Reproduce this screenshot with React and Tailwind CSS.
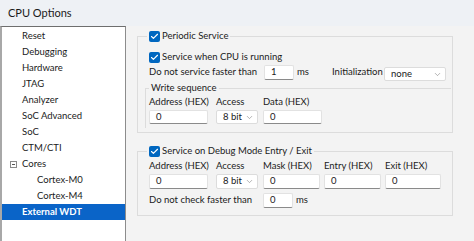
import { Check, ChevronDown } from "lucide-react";

const treeItems = [
  { label: "Reset", indent: 0 },
  { label: "Debugging", indent: 0 },
  { label: "Hardware", indent: 0 },
  { label: "JTAG", indent: 0 },
  { label: "Analyzer", indent: 0 },
  { label: "SoC Advanced", indent: 0 },
  { label: "SoC", indent: 0 },
  { label: "CTM/CTI", indent: 0 },
  { label: "Cores", indent: 0, toggle: true },
  { label: "Cortex-M0", indent: 1 },
  { label: "Cortex-M4", indent: 1 },
  { label: "External WDT", indent: 0, selected: true },
];

const CheckBox = () => (
  <span className="w-[11px] h-[11px] rounded-[2px] bg-[#0067c0] flex items-center justify-center shrink-0">
    <Check size={9} strokeWidth={3} className="text-white" />
  </span>
);

const Input = ({ value, w }) => (
  <div
    className={`${w} h-full bg-white border border-[#e2e2e2] border-b-[#8a8a8a] rounded-[2px] flex items-center pl-[6px] text-[#1a1a1a]`}
  >
    {value}
  </div>
);

const Select = ({ value, w }) => (
  <div
    className={`${w} h-full bg-white border border-[#dcdcdc] rounded-[2px] flex items-center justify-between pl-[6px] pr-[3px] text-[#1a1a1a] whitespace-nowrap`}
  >
    <span>{value}</span>
    <ChevronDown size={9} strokeWidth={1.25} className="text-[#606060]" />
  </div>
);

export default function App() {
  return (
    <div
      className="w-[474px] h-[241px] bg-[#f3f3f3] text-[9.5px] text-[#1b1b1b] overflow-hidden flex flex-col whitespace-nowrap"
      style={{ fontFamily: 'Lato, "Liberation Sans", sans-serif' }}
    >
      {/* Header */}
      <div className="h-[26px] shrink-0 bg-[#eef1f5] flex items-center pl-[8px] text-[11px] text-[#1a1a1a]">
        CPU Options
      </div>

      <div className="flex flex-1 min-h-0">
        {/* Tree */}
        <div className="w-[126px] shrink-0 bg-white border-l-2 border-t border-r border-l-[#a8a8a8] border-t-[#6e6e6e] border-r-[#8c8c8c] pt-[1px]">
          {treeItems.map((it) => (
            <div
              key={it.label}
              className={`h-[16px] flex items-center ${
                it.selected ? "bg-[#0a64c8] text-white font-bold" : ""
              }`}
            >
              {it.toggle ? (
                <span className="w-[20px] pl-[8px] flex items-center">
                  <span className="w-[7px] h-[7px] border border-[#8a8a8a] flex items-center justify-center">
                    <span className="w-[3px] h-[1px] bg-[#555]" />
                  </span>
                </span>
              ) : (
                <span className={it.indent ? "w-[35px]" : "w-[20px]"} />
              )}
              <span>{it.label}</span>
            </div>
          ))}
        </div>

        {/* Content */}
        <div className="flex-1 pl-[11px] pt-[4px]">
          {/* Periodic Service */}
          <fieldset className="w-[316px] border border-[#dcdcdc] pl-[11px] pb-[4px]">
            <legend className="-ml-[2px] px-[2px] h-[12px]">
              <span className="flex items-center gap-[2px] h-[12px]">
                <CheckBox />
                <span>Periodic Service</span>
              </span>
            </legend>
            <div className="mt-[8px] h-[14px] flex items-center gap-[2px]">
              <CheckBox />
              <span>Service when CPU is running</span>
            </div>
            <div className="mt-[1px] h-[15px] flex items-center">
              <span className="w-[115px]">Do not service faster than</span>
              <Input value="1" w="w-[30px]" />
              <span className="ml-[3px] w-[35px]">ms</span>
              <span className="w-[52px]">Initialization</span>
              <div className="h-[14px] mt-[3px]">
                <Select value="none" w="w-[62px]" />
              </div>
            </div>
            <fieldset className="-ml-[4px] mt-[2px] w-[306px] border-t border-l border-[#dcdcdc] pl-[3px] pb-[4px]">
              <legend className="px-[2px] h-[12px] leading-[12px]">Write sequence</legend>
              <div className="mt-[2px] h-[12px] flex items-center">
                <span className="w-[67px]">Address (HEX)</span>
                <span className="w-[47px]">Access</span>
                <span>Data (HEX)</span>
              </div>
              <div className="mt-[2px] h-[14px] flex">
                <Input value="0" w="w-[59px]" />
                <div className="ml-[8px]">
                  <Select value="8 bit" w="w-[42px]" />
                </div>
                <div className="ml-[5px] h-full">
                  <Input value="0" w="w-[59px]" />
                </div>
              </div>
            </fieldset>
          </fieldset>

          {/* Debug Mode Entry / Exit */}
          <fieldset className="mt-[12px] w-[316px] border border-[#dcdcdc] pl-[11px] pb-[7px]">
            <legend className="-ml-[2px] px-[2px] h-[12px]">
              <span className="flex items-center gap-[2px] h-[12px]">
                <CheckBox />
                <span>Service on Debug Mode Entry / Exit</span>
              </span>
            </legend>
            <div className="mt-[3px] h-[12px] flex items-center">
              <span className="w-[67px]">Address (HEX)</span>
              <span className="w-[47px]">Access</span>
              <span className="w-[61px]">Mask (HEX)</span>
              <span className="w-[61px]">Entry (HEX)</span>
              <span>Exit (HEX)</span>
            </div>
            <div className="mt-[2px] h-[15px] flex">
              <Input value="0" w="w-[59px]" />
              <div className="ml-[8px]">
                <Select value="8 bit" w="w-[42px]" />
              </div>
              <div className="ml-[5px] h-full">
                <Input value="0" w="w-[57px]" />
              </div>
              <div className="ml-[4px] h-full">
                <Input value="0" w="w-[57px]" />
              </div>
              <div className="ml-[4px] h-full">
                <Input value="0" w="w-[56px]" />
              </div>
            </div>
            <div className="mt-[4px] h-[15px] flex items-center">
              <span className="w-[114px]">Do not check faster than</span>
              <Input value="0" w="w-[30px]" />
              <span className="ml-[3px]">ms</span>
            </div>
          </fieldset>
        </div>
      </div>
    </div>
  );
}
